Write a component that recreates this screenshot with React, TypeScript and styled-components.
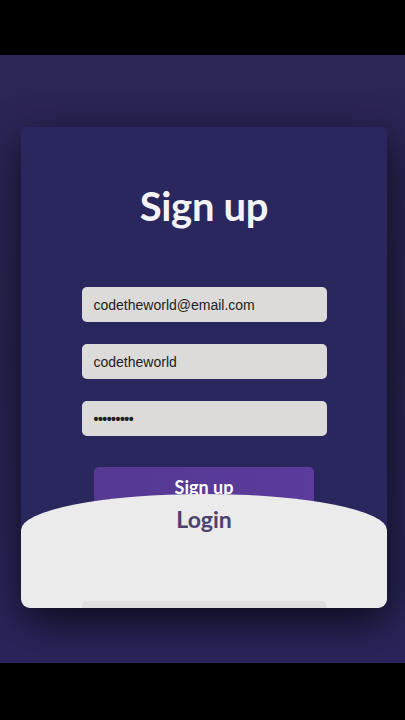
import React from "react";
import styled, { createGlobalStyle } from "styled-components";

const Global = createGlobalStyle`
  html, body { margin: 0; padding: 0; background: #000; }
  body { font-family: "Lato", "Liberation Sans", sans-serif; }
  * { box-sizing: border-box; }
`;

const Page = styled.div`
  width: 405px;
  height: 720px;
  display: flex;
  flex-direction: column;
  background: #000;
`;

const Bar = styled.div`
  height: 55px;
  flex: none;
  background: #000;
`;

const Stage = styled.div`
  height: 608px;
  flex: none;
  background: linear-gradient(180deg, #2c2558 0%, #282350 50%, #29255c 100%);
  padding: 72px 18px 0 21px;
`;

const Card = styled.div`
  position: relative;
  width: 366px;
  height: 481px;
  background: #29275e;
  border-radius: 6px 6px 9px 9px;
  overflow: hidden;
  box-shadow: 2px 14px 40px rgba(0, 0, 0, 0.7);
  display: flex;
  flex-direction: column;
  align-items: center;
  padding-top: 55px;
`;

const Title = styled.h1`
  margin: 0;
  font-family: "Lato", sans-serif;
  font-weight: 700;
  font-size: 40px;
  line-height: 48px;
  color: #f4f4f6;
  letter-spacing: -0.3px;
`;

const Fields = styled.div`
  margin-top: 57px;
  display: flex;
  flex-direction: column;
  gap: 22px;
`;

const Field = styled.div`
  width: 245px;
  height: 35px;
  border-radius: 5px;
  background: #dcdbd9;
  padding-left: 12px;
  display: flex;
  align-items: center;
  font-family: "Liberation Sans", Arial, sans-serif;
  font-size: 14px;
  color: #222;
`;

const Dots = styled.span`
  font-size: 14px;
  letter-spacing: -0.5px;
  font-weight: 700;
  color: #222;
`;

const Button = styled.div`
  margin-top: 31px;
  width: 220px;
  height: 40px;
  border-radius: 5px;
  background: linear-gradient(90deg, #553993 0%, #5b3b9b 100%);
  color: #fff;
  font-family: "Lato", sans-serif;
  font-weight: 700;
  font-size: 18px;
  display: flex;
  align-items: center;
  justify-content: center;
`;

const LoginPanel = styled.div`
  position: absolute;
  left: 0;
  right: 0;
  top: 367px;
  height: 440px;
  background: #ebebeb;
  border-radius: 50% 50% 0 0 / 36px 36px 0 0;
  display: flex;
  flex-direction: column;
  align-items: center;
  padding-top: 11px;
`;

const LoginTitle = styled.div`
  font-family: "Lato", sans-serif;
  font-weight: 700;
  font-size: 23px;
  line-height: 28px;
  color: #4a4270;
`;

const LoginField = styled.div`
  margin-top: 68px;
  width: 245px;
  height: 35px;
  border-radius: 5px;
  background: #dfdfdf;
`;

export default function App() {
  return (
    <>
      <Global />
      <Page>
        <Bar />
        <Stage>
          <Card>
            <Title>Sign up</Title>
            <Fields>
              <Field>codetheworld@email.com</Field>
              <Field>codetheworld</Field>
              <Field>
                <Dots>•••••••••</Dots>
              </Field>
            </Fields>
            <Button>Sign up</Button>
            <LoginPanel>
              <LoginTitle>Login</LoginTitle>
              <LoginField />
            </LoginPanel>
          </Card>
        </Stage>
        <Bar />
      </Page>
    </>
  );
}
